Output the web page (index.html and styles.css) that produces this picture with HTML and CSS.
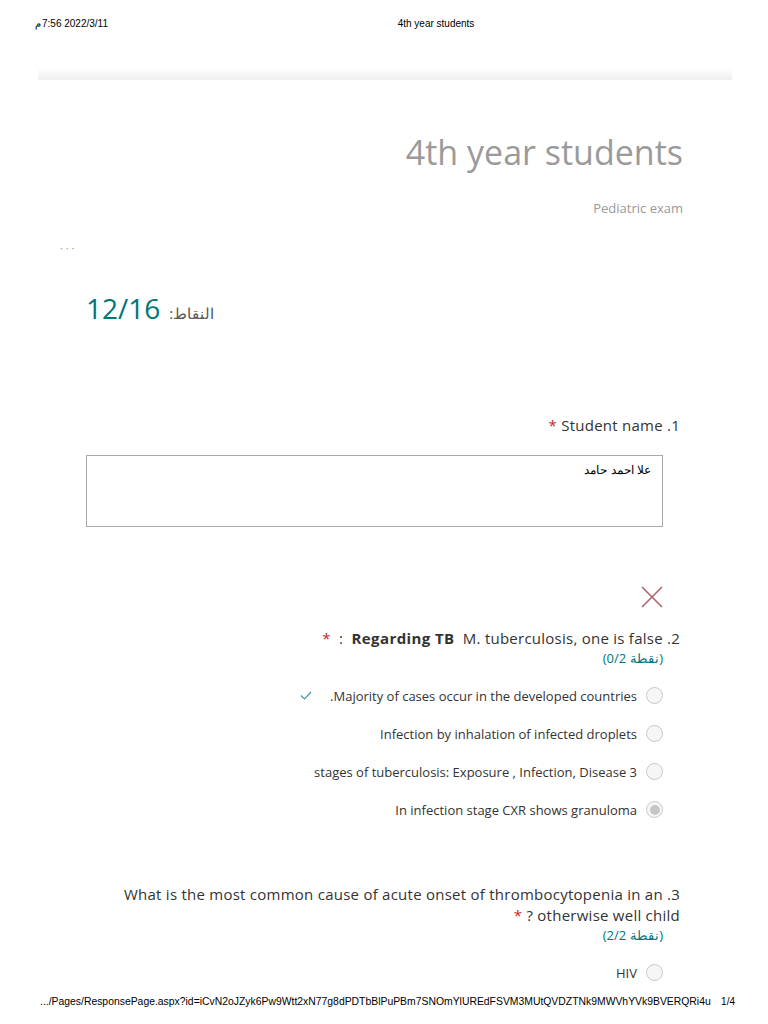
FILE: index.html
```html
<!DOCTYPE html>
<html lang="ar">
<head>
  <meta charset="UTF-8">
  <meta name="viewport" content="width=device-width, initial-scale=1.0">
  <title>4th year students</title>
  <link rel="stylesheet" href="styles.css">
</head>
<body>
  <div class="page">
    <!-- ترويسة الطباعة -->
    <div class="print-header">
      <div class="print-date">
        <span>م</span>
        <span>7:56 2022/3/11</span>
      </div>
      <span class="print-title">4th year students</span>
      <span class="print-spacer"></span>
    </div>

    <div class="card-edge"></div>

    <div class="form">
      <div class="form-head">
        <div class="form-title">4th year students</div>
        <div class="form-desc">Pediatric exam</div>
      </div>

      <div class="more-dots">· · ·</div>

      <div class="score">
        <span class="score-value">12/16</span>
        <span class="score-label" dir="rtl">النقاط:</span>
      </div>

      <!-- السؤال 1 -->
      <div class="question q-first">
        <div class="q-title"><span class="req">*</span> Student name .1</div>
        <div class="q-body">
          <div class="text-answer" dir="rtl">علا احمد حامد</div>
        </div>
      </div>

      <!-- السؤال 2 -->
      <div class="question q-second">
        <div class="q-body">
          <div class="mark-wrong">
            <svg width="22" height="22" viewBox="0 0 22 22">
              <path d="M1 1 L21 21 M21 1 L1 21" stroke="#b0636a" stroke-width="1.6" fill="none"/>
            </svg>
          </div>
        </div>
        <div class="q-title"><span class="req">*</span>&nbsp; : &nbsp;<b>Regarding TB</b>&nbsp; M. tuberculosis, one is false .2</div>
        <div class="q-body">
          <div class="q-points">
            <span>(0/2</span>
            <span>نقطة)</span>
          </div>
          <div class="options">
            <div class="option">
              <span class="check">
                <svg width="12" height="9" viewBox="0 0 12 9">
                  <path d="M1 4.5 L4.5 8 L11 1" stroke="#3a9ea5" stroke-width="1.2" fill="none"/>
                </svg>
              </span>
              <span class="option-text">.Majority of cases occur in the developed countries</span>
              <span class="radio"></span>
            </div>
            <div class="option">
              <span class="option-text">Infection by inhalation of infected droplets</span>
              <span class="radio"></span>
            </div>
            <div class="option">
              <span class="option-text">stages of tuberculosis: Exposure , Infection, Disease 3</span>
              <span class="radio"></span>
            </div>
            <div class="option">
              <span class="option-text">In infection stage CXR shows granuloma</span>
              <span class="radio checked"></span>
            </div>
          </div>
        </div>
      </div>

      <!-- السؤال 3 -->
      <div class="question q-third">
        <div class="q-title">What is the most common cause of acute onset of thrombocytopenia in an .3</div>
        <div class="q-title"><span class="req">*</span> ? otherwise well child</div>
        <div class="q-body">
          <div class="q-points">
            <span>(2/2</span>
            <span>نقطة)</span>
          </div>
          <div class="options">
            <div class="option">
              <span class="option-text">HIV</span>
              <span class="radio"></span>
            </div>
          </div>
        </div>
      </div>
    </div>

    <!-- تذييل الطباعة -->
    <div class="print-footer">
      <span class="print-url">.../Pages/ResponsePage.aspx?id=iCvN2oJZyk6Pw9Wtt2xN77g8dPDTbBlPuPBm7SNOmYlUREdFSVM3MUtQVDZTNk9MWVhYVk9BVERQRi4u</span>
      <span class="print-page">1/4</span>
    </div>
  </div>
</body>
</html>
```

FILE: styles.css
```css
/* عام */
* {
  box-sizing: border-box;
  margin: 0;
  padding: 0;
}

body {
  background-color: #fff;
  color: #333;
  font-family: 'Open Sans', 'Noto Sans', sans-serif;
}

.page {
  width: 768px;
  height: 1024px;
  display: flex;
  flex-direction: column;
  overflow: hidden;
}

/* ترويسة وتذييل الطباعة */
.print-header,
.print-footer {
  display: flex;
  font-family: 'Liberation Sans', Arial, sans-serif;
  font-size: 10px;
  line-height: 12px;
  color: #000;
}

.print-header {
  padding: 18px 35px 0 35px;
  height: 68px;
}

.print-date {
  display: flex;
  gap: 1px;
  width: 120px;
}

.print-spacer {
  width: 120px;
}

.print-title {
  flex: 1;
  text-align: center;
  padding-left: 104px;
}

.print-footer {
  padding: 0 33px 16px 40px;
  justify-content: space-between;
}

.print-url {
  font-size: 10.4px;
}

/* حافة البطاقة */
.card-edge {
  margin: 0 36px 0 38px;
  height: 12px;
  background: linear-gradient(to bottom, #fff, #efefef);
}

/* النموذج */
.form {
  flex: 1;
  padding: 0 85px 0 60px;
}

.form-head {
  text-align: right;
  padding-top: 50px;
}

.form-title {
  font-size: 34px;
  line-height: 44px;
  color: #9a9a9a;
}

.form-desc {
  margin-top: 25px;
  font-size: 13px;
  line-height: 18px;
  color: #999;
}

.more-dots {
  margin-top: 24px;
  font-size: 11px;
  line-height: 14px;
  color: #999;
}

.score {
  display: flex;
  align-items: baseline;
  gap: 9px;
  margin-top: 35px;
  padding-left: 26px;
}

.score-value {
  font-size: 28px;
  line-height: 36px;
  color: #00757a;
}

.score-label {
  font-size: 15px;
  color: #555;
}

/* الأسئلة */
.question {
  text-align: right;
}

.q-title {
  padding-right: 3px;
  font-size: 15px;
  line-height: 21px;
  letter-spacing: 0.25px;
  color: #333;
}

.q-title b {
  font-weight: 700;
  letter-spacing: 0.4px;
}

.req {
  color: #c4262e;
}

.q-body {
  padding-right: 20px;
  padding-left: 26px;
}

.q-first {
  margin-top: 89px;
}

.text-answer {
  margin-top: 19px;
  height: 72px;
  border: 1px solid #aaa;
  padding: 6px 11px;
  font-family: 'Liberation Sans', Arial, sans-serif;
  font-size: 12px;
  line-height: 16px;
  color: #000;
}

.q-second {
  margin-top: 59px;
}

.mark-wrong {
  display: flex;
  justify-content: flex-end;
  height: 22px;
  margin-bottom: 20px;
}

.q-points {
  display: flex;
  justify-content: flex-end;
  gap: 4px;
  font-size: 13px;
  line-height: 19px;
  color: #00757a;
}

.options {
  margin-top: 19px;
  display: flex;
  flex-direction: column;
  gap: 21px;
}

.option {
  display: flex;
  align-items: center;
  justify-content: flex-end;
  height: 17px;
  font-size: 13px;
  color: #333;
}

.option-text {
  margin-right: 9px;
}

.check {
  display: flex;
  margin-right: 18px;
}

.radio {
  width: 17px;
  height: 17px;
  border: 1px solid #c8c8c8;
  border-radius: 50%;
  background-color: #f6f6f6;
  display: flex;
  align-items: center;
  justify-content: center;
}

.radio.checked::after {
  content: '';
  width: 10px;
  height: 10px;
  border-radius: 50%;
  background-color: #c6c6c6;
}

.q-third {
  margin-top: 66px;
}

.q-third .options {
  margin-top: 19px;
}
```
